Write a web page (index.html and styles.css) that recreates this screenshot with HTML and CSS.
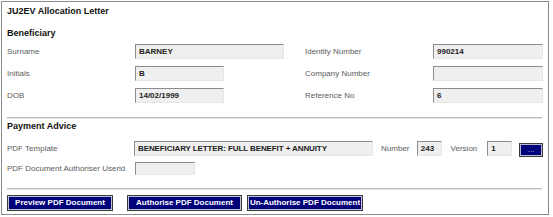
FILE: index.html
```html
<!DOCTYPE html>
<html lang="en">
<head>
    <meta charset="UTF-8">
    <title>JU2EV Allocation Letter</title>
    <link rel="stylesheet" href="styles.css">
</head>
<body>
    <div class="panel">
        <div class="title">JU2EV Allocation Letter</div>

        <!-- Beneficiary -->
        <div class="section-head">Beneficiary</div>
        <div class="fields">
            <span class="label">Surname</span>
            <div class="input wide">BARNEY</div>
            <span class="label">Identity Number</span>
            <div class="input right">990214</div>

            <span class="label">Initials</span>
            <div class="input short">B</div>
            <span class="label">Company Number</span>
            <div class="input right"></div>

            <span class="label">DOB</span>
            <div class="input short">14/02/1999</div>
            <span class="label">Reference No</span>
            <div class="input right">6</div>
        </div>

        <div class="rule"></div>

        <!-- Payment Advice -->
        <div class="section-head">Payment Advice</div>
        <div class="row template-row">
            <span class="label col">PDF Template</span>
            <div class="input template">BENEFICIARY LETTER: FULL BENEFIT + ANNUITY</div>
            <span class="label number-label">Number</span>
            <div class="input tiny">243</div>
            <span class="label version-label">Version</span>
            <div class="input tiny">1</div>
            <button class="lookup">...</button>
        </div>
        <div class="row userid-row">
            <span class="label col">PDF Document Authoriser Userid</span>
            <div class="input userid"></div>
        </div>

        <div class="rule second"></div>

        <div class="actions">
            <button class="action preview">Preview PDF Document</button>
            <button class="action authorise">Authorise PDF Document</button>
            <button class="action unauthorise">Un-Authorise PDF Document</button>
        </div>
    </div>
</body>
</html>
```

FILE: styles.css
```css
* {
    margin: 0;
    padding: 0;
    box-sizing: border-box;
    font-family: "Liberation Sans", Arial, sans-serif;
}

body {
    background-color: white;
}

.panel {
    margin: 1px 0 0 1px;
    width: 548px;
    height: 214px;
    border: 1px solid #8a8a8a;
    padding: 0 6px 0 5px;
    overflow: hidden;
}

.title {
    font-size: 9px;
    font-weight: bold;
    color: #111;
    line-height: 18px;
}

.section-head {
    font-size: 9px;
    font-weight: bold;
    color: #111;
    line-height: 14px;
}

.title + .section-head {
    margin-top: 6px;
}

.label {
    font-size: 8px;
    color: #5c5c5c;
    line-height: 15px;
    white-space: nowrap;
}

/* Beneficiary grid */
.fields {
    margin-top: 4px;
    display: grid;
    grid-template-columns: 128px 170px 128px 110px;
    grid-auto-rows: 15px;
    row-gap: 7px;
}

.input {
    height: 15px;
    background-color: #efefef;
    border-top: 1px solid #8c8c8c;
    border-left: 1px solid #8c8c8c;
    border-right: 1px solid #e6e6e6;
    border-bottom: 1px solid #e6e6e6;
    padding-left: 3px;
    font-size: 8px;
    font-weight: bold;
    color: #222;
    line-height: 13px;
    white-space: nowrap;
    overflow: hidden;
}

.wide {
    width: 149px;
}

.short {
    width: 89px;
}

.right {
    width: 110px;
}

.rule {
    margin-top: 14px;
    height: 2px;
    border-top: 1px solid #bdbdbd;
    border-bottom: 1px solid #e4e4e4;
}

/* Payment advice rows */
.row {
    display: flex;
    align-items: flex-start;
}

.col {
    width: 128px;
}

.template-row {
    margin-top: 8px;
}

.template {
    width: 241px;
    letter-spacing: -0.1px;
}

.number-label {
    margin-left: 8px;
    width: 36px;
}

.version-label {
    margin-left: 9px;
    width: 37px;
}

.tiny {
    width: 25px;
}

.lookup {
    margin: 3px 0 0 8px;
    padding: 0;
    width: 22px;
    height: 12px;
    background-color: #00007c;
    border: 1px solid #b8b8c8;
    outline: 1px solid #3a3a3a;
    color: #d0d0e8;
    font-size: 8px;
    line-height: 8px;
}

.userid-row {
    margin-top: 6px;
}

.userid-row .label {
    line-height: 13px;
}

.userid {
    width: 60px;
    height: 13px;
}

.rule.second {
    margin-top: 13px;
}

/* Buttons */
.actions {
    margin-top: 6px;
    margin-left: 1px;
    display: flex;
}

.action {
    height: 14px;
    padding: 0;
    background-color: #00007a;
    border: 1px solid #c4c4d4;
    outline: 1px solid #3a3a3a;
    color: white;
    font-size: 8px;
    font-weight: bold;
    line-height: 12px;
    cursor: pointer;
}

.preview {
    width: 104px;
}

.authorise {
    width: 113px;
    margin-left: 16px;
}

.unauthorise {
    width: 114px;
    margin-left: 7px;
}
```
